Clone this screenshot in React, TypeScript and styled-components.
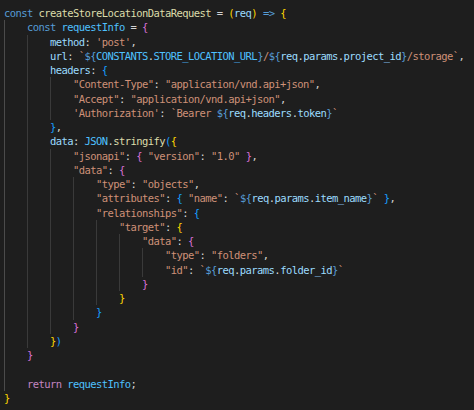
import React from 'react';
import styled, { createGlobalStyle } from 'styled-components';

const GlobalStyle = createGlobalStyle`
  html, body {
    margin: 0;
    padding: 0;
    background: #1e1e1e;
  }
`;

const colors = {
  kw: '#569cd6',
  fn: '#dcdcaa',
  v: '#9cdcfe',
  op: '#d4d4d4',
  s: '#ce9178',
  tp: '#569cd6',
  k: '#4fc1ff',
  cl: '#4ec9b0',
  ct: '#c586c0',
  b1: '#ffd700',
  b2: '#da70d6',
  b3: '#179fff',
};

type Kind = keyof typeof colors;
type Tok = [string, Kind];

const Editor = styled.div`
  width: 474px;
  height: 410px;
  box-sizing: border-box;
  padding: 6px 0 0 4px;
  background: #1e1e1e;
  display: flex;
  flex-direction: column;
  font-family: 'DejaVu Sans Mono', 'Liberation Mono', monospace;
  font-size: 10.5px;
  letter-spacing: -0.57px;
  overflow: hidden;
`;

const Line = styled.div`
  display: flex;
  height: 14.25px;
  line-height: 14.25px;
  white-space: pre;
`;

const Guide = styled.span<{ $active?: boolean }>`
  flex: none;
  width: 23px;
  height: 100%;
  box-sizing: border-box;
  border-left: 1px solid ${(p) => (p.$active ? '#4b4b4b' : '#3a3a3a')};
`;

const Token = styled.span<{ $kind: Kind }>`
  color: ${(p) => colors[p.$kind]};
`;

const lines: [number, Tok[]][] = [
  [0, [['const ', 'kw'], ['createStoreLocationDataRequest', 'fn'], [' = ', 'op'], ['(', 'b1'], ['req', 'v'], [')', 'b1'], [' => ', 'kw'], ['{', 'b1']]],
  [1, [['const ', 'kw'], ['requestInfo', 'k'], [' = ', 'op'], ['{', 'b2']]],
  [2, [['method', 'v'], [': ', 'op'], ["'post'", 's'], [',', 'op']]],
  [2, [['url', 'v'], [': ', 'op'], ['`', 's'], ['${', 'tp'], ['CONSTANTS', 'k'], ['.', 'op'], ['STORE_LOCATION_URL', 'k'], ['}', 'tp'], ['/', 's'], ['${', 'tp'], ['req', 'v'], ['.', 'op'], ['params', 'v'], ['.', 'op'], ['project_id', 'v'], ['}', 'tp'], ['/storage`', 's'], [',', 'op']]],
  [2, [['headers', 'v'], [': ', 'op'], ['{', 'b3']]],
  [3, [['"Content-Type"', 's'], [': ', 'op'], ['"application/vnd.api+json"', 's'], [',', 'op']]],
  [3, [['"Accept"', 's'], [': ', 'op'], ['"application/vnd.api+json"', 's'], [',', 'op']]],
  [3, [["'Authorization'", 's'], [': ', 'op'], ['`Bearer ', 's'], ['${', 'tp'], ['req', 'v'], ['.', 'op'], ['headers', 'v'], ['.', 'op'], ['token', 'v'], ['}', 'tp'], ['`', 's']]],
  [2, [['}', 'b3'], [',', 'op']]],
  [2, [['data', 'v'], [': ', 'op'], ['JSON', 'k'], ['.', 'op'], ['stringify', 'fn'], ['(', 'b3'], ['{', 'b1']]],
  [3, [['"jsonapi"', 's'], [': ', 'op'], ['{', 'b2'], [' ', 'op'], ['"version"', 's'], [': ', 'op'], ['"1.0"', 's'], [' ', 'op'], ['}', 'b2'], [',', 'op']]],
  [3, [['"data"', 's'], [': ', 'op'], ['{', 'b2']]],
  [4, [['"type"', 's'], [': ', 'op'], ['"objects"', 's'], [',', 'op']]],
  [4, [['"attributes"', 's'], [': ', 'op'], ['{', 'b3'], [' ', 'op'], ['"name"', 's'], [': ', 'op'], ['`', 's'], ['${', 'tp'], ['req', 'v'], ['.', 'op'], ['params', 'v'], ['.', 'op'], ['item_name', 'v'], ['}', 'tp'], ['`', 's'], [' ', 'op'], ['}', 'b3'], [',', 'op']]],
  [4, [['"relationships"', 's'], [': ', 'op'], ['{', 'b3']]],
  [5, [['"target"', 's'], [': ', 'op'], ['{', 'b1']]],
  [6, [['"data"', 's'], [': ', 'op'], ['{', 'b2']]],
  [7, [['"type"', 's'], [': ', 'op'], ['"folders"', 's'], [',', 'op']]],
  [7, [['"id"', 's'], [': ', 'op'], ['`', 's'], ['${', 'tp'], ['req', 'v'], ['.', 'op'], ['params', 'v'], ['.', 'op'], ['folder_id', 'v'], ['}', 'tp'], ['`', 's']]],
  [6, [['}', 'b2']]],
  [5, [['}', 'b1']]],
  [4, [['}', 'b3']]],
  [3, [['}', 'b2']]],
  [2, [['}', 'b1'], [')', 'b3']]],
  [1, [['}', 'b2']]],
  [1, []],
  [1, [['return ', 'ct'], ['requestInfo', 'k'], [';', 'op']]],
  [0, [['}', 'b1']]],
];

const App = (): JSX.Element => (
  <>
    <GlobalStyle />
    <Editor>
      {lines.map(([indent, toks], i) => (
        <Line key={i}>
          {Array.from({ length: indent }, (_, g) => (
            <Guide key={g} $active={g === 0} />
          ))}
          {toks.map(([text, kind], j) => (
            <Token key={j} $kind={kind}>
              {text}
            </Token>
          ))}
        </Line>
      ))}
    </Editor>
  </>
);

export default App;
